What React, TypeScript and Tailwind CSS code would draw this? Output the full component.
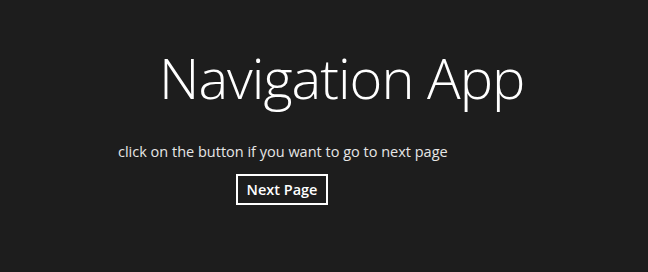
export default function App() {
  return (
    <div className="h-[272px] w-[648px] overflow-hidden bg-[#1d1d1d] text-white font-['Open_Sans',sans-serif]">
      <div className="flex flex-col">
        <h1 className="ml-[159px] mt-[43px] text-[56px] font-light leading-[68px] tracking-[-1px]">
          Navigation App
        </h1>
        <p className="ml-[118px] mt-[31px] text-[14.5px] leading-[20px] text-[#e6e6e6]">
          click on the button if you want to go to next page
        </p>
        <div className="ml-[236px] mt-[12px]">
          <button className="h-[31px] w-[92px] border-2 border-white text-[14.5px] font-semibold text-white">
            Next Page
          </button>
        </div>
      </div>
    </div>
  )
}
